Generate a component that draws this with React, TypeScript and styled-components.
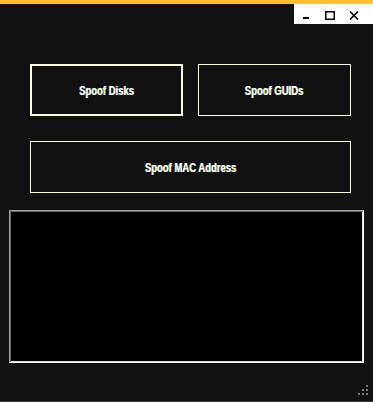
import React from "react";
import styled, { createGlobalStyle } from "styled-components";

const Global = createGlobalStyle`
  html, body { margin: 0; padding: 0; background: #111111; }
  #root { height: 402px; }
`;

const Window = styled.div`
  position: relative;
  height: 402px;
  width: 373px;
  background: #111111;
  display: flex;
  flex-direction: column;
  box-sizing: border-box;
  border-bottom: 1px solid #3a3a3a;
`;

const Stripe = styled.div`
  height: 4px;
  background: #ffc32b;
`;

const TitleRow = styled.div`
  height: 20px;
  display: flex;
  justify-content: flex-end;
`;

const ControlBox = styled.div`
  width: 79px;
  height: 20px;
  box-sizing: border-box;
  padding-right: 7px;
  background: #ffffff;
  display: flex;
`;

const ControlButton = styled.div`
  width: 24px;
  display: flex;
  align-items: flex-start;
  justify-content: center;
  padding-top: 7px;
  box-sizing: border-box;
`;

const Content = styled.div`
  padding: 40px 0 0 30px;
  display: grid;
  grid-template-columns: 153px 153px;
  grid-template-rows: 52px 52px;
  column-gap: 15px;
  row-gap: 25px;
`;

const SpoofButton = styled.button<{ $wide?: boolean; $focused?: boolean }>`
  grid-column: ${(p) => (p.$wide ? "1 / span 2" : "auto")};
  box-sizing: border-box;
  background: #111111;
  border: ${(p) => (p.$focused ? "2px" : "1px")} solid #fffbe0;
  color: #fffff2;
  padding: 0;
  margin: 0;
  cursor: pointer;
  display: flex;
  align-items: center;
  justify-content: center;
`;

const Label = styled.span`
  display: inline-block;
  font-family: "Liberation Sans", Arial, sans-serif;
  font-weight: 700;
  font-size: 13px;
  line-height: 13px;
  white-space: nowrap;
  transform: scaleX(0.73);
  text-shadow: -0.6px 0 rgba(80, 200, 255, 0.7), 0.6px 0 rgba(255, 190, 60, 0.7);
`;

const Output = styled.div`
  margin: 17px 0 0 9px;
  width: 355px;
  height: 153px;
  box-sizing: border-box;
  background: #000000;
  border-style: solid;
  border-width: 1px;
  border-color: #a0a0a0 #ffffff #ffffff #a0a0a0;
  box-shadow: inset 1px 1px 0 #696969, inset -1px -1px 0 #e3e3e3;
`;

const Grip = styled.svg`
  position: absolute;
  right: 3px;
  bottom: 4px;
`;

export default function App() {
  return (
    <>
      <Global />
      <Window>
        <Stripe />
        <TitleRow>
          <ControlBox>
            <ControlButton>
              <svg width="10" height="9" viewBox="0 0 10 9">
                <rect x="2" y="6" width="6" height="2" fill="#000" />
              </svg>
            </ControlButton>
            <ControlButton>
              <svg width="10" height="9" viewBox="0 0 10 9">
                <rect x="0.75" y="0.75" width="8.5" height="7.5" fill="none" stroke="#000" strokeWidth="1.5" />
              </svg>
            </ControlButton>
            <ControlButton>
              <svg width="10" height="9" viewBox="0 0 10 9">
                <path d="M1 0.5 L9 8.5 M9 0.5 L1 8.5" stroke="#000" strokeWidth="1.6" />
              </svg>
            </ControlButton>
          </ControlBox>
        </TitleRow>
        <Content>
          <SpoofButton $focused>
            <Label>Spoof Disks</Label>
          </SpoofButton>
          <SpoofButton>
            <Label>Spoof GUIDs</Label>
          </SpoofButton>
          <SpoofButton $wide>
            <Label>Spoof MAC Address</Label>
          </SpoofButton>
        </Content>
        <Output />
        <Grip width="12" height="12" viewBox="0 0 12 12">
          <rect x="8" y="0" width="2" height="2" fill="#7a7a7a" />
          <rect x="4" y="4" width="2" height="2" fill="#7a7a7a" />
          <rect x="8" y="4" width="2" height="2" fill="#7a7a7a" />
          <rect x="0" y="8" width="2" height="2" fill="#7a7a7a" />
          <rect x="4" y="8" width="2" height="2" fill="#7a7a7a" />
          <rect x="8" y="8" width="2" height="2" fill="#7a7a7a" />
        </Grip>
      </Window>
    </>
  );
}
